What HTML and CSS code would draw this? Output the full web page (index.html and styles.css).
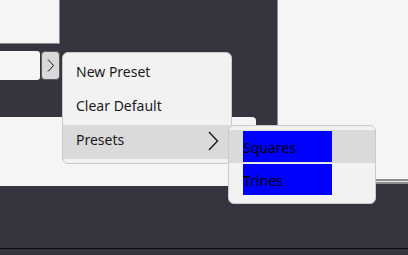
FILE: index.html
```html
<!DOCTYPE html>
<html>
<head>
<meta charset="utf-8">
<link rel="stylesheet" href="styles.css">
</head>
<body>
<div class="stage">
  <div class="top">
    <div class="left">
      <div class="panel-top"></div>
      <div class="input-row">
        <div class="field"></div>
        <div class="step-btn">
          <svg width="8" height="13" viewBox="0 0 8 13"><path d="M1 0.5 L6.5 6.5 L1 12.5" fill="none" stroke="#111" stroke-width="1"/></svg>
        </div>
      </div>
      <div class="panel-low"></div>
    </div>
    <div class="right">
      <div class="right-body"></div>
      <div class="right-rule"></div>
    </div>
  </div>
  <div class="bottom"></div>

  <div class="menu">
    <div class="item">New Preset</div>
    <div class="item">Clear Default</div>
    <div class="item active">Presets
      <svg class="chev" width="11" height="20" viewBox="0 0 11 20"><path d="M1 1 L9.5 10 L1 19" fill="none" stroke="#1a1a1a" stroke-width="1.4"/></svg>
    </div>
  </div>

  <div class="submenu">
    <div class="sub-item active"><span class="swatch">Squares</span></div>
    <div class="sub-item"><span class="swatch">Trines</span></div>
  </div>
</div>
</body>
</html>
```

FILE: styles.css
```css
html, body {
  margin: 0;
  padding: 0;
}
body {
  font-family: "Noto Sans", "Open Sans", sans-serif;
  background: #35353f;
}
.stage {
  position: relative;
  width: 408px;
  height: 255px;
  overflow: hidden;
  background: #35353f;
  display: flex;
  flex-direction: column;
}
.top {
  display: flex;
  height: 186px;
}
.left {
  width: 277px;
  display: flex;
  flex-direction: column;
}
.panel-top {
  width: 59px;
  height: 43px;
  background: #f5f5f5;
  border-right: 1px solid #8a8a90;
  border-bottom: 1px solid #8a8a90;
}
.input-row {
  display: flex;
  margin-top: 7px;
  height: 29px;
  gap: 1px;
}
.field {
  width: 40px;
  background: #f5f5f5;
  border-radius: 0 3px 3px 0;
}
.step-btn {
  width: 17px;
  background: #d9d9d9;
  border: 1px solid #5a5a60;
  border-radius: 4px;
  display: flex;
  align-items: center;
  justify-content: center;
}
.panel-low {
  margin-top: 37px;
  width: 256px;
  height: 69px;
  background: #f5f5f5;
  border-top-right-radius: 4px;
}
.right {
  flex: 1;
  display: flex;
  flex-direction: column;
}
.right-body {
  height: 179px;
  background: #f5f5f5;
  border-left: 1px solid #8a8a90;
}
.right-rule {
  height: 1px;
  border-top: 2px solid #8e8e92;
  border-bottom: 2px solid #8e8e92;
  background: #e6e6e6;
}
.bottom {
  height: 62px;
  border-bottom: 1px solid #0c0c0e;
}
.menu {
  position: absolute;
  left: 62px;
  top: 52px;
  width: 168px;
  height: 110px;
  padding-top: 4px;
  box-sizing: content-box;
  background: #f2f2f2;
  border: 1px solid #c9c9c9;
  border-radius: 6px;
}
.menu {
  height: 106px;
}
.item {
  position: relative;
  height: 30px;
  line-height: 30px;
  padding: 0 0 4px 13px;
  font-size: 14px;
  color: #1a1a1a;
}
.item.active {
  background: #dadada;
}
.chev {
  position: absolute;
  left: 145px;
  top: 6px;
}
.submenu {
  position: absolute;
  left: 228px;
  top: 125px;
  width: 146px;
  height: 73px;
  padding-top: 4px;
  background: #f2f2f2;
  border: 1px solid #c9c9c9;
  border-radius: 6px;
}
.sub-item {
  height: 31px;
  padding: 1px 0 1px 14px;
}
.sub-item.active {
  background: #dadada;
}
.swatch {
  display: block;
  width: 89px;
  height: 31px;
  line-height: 33px;
  background: #0000ff;
  color: #000;
  font-size: 14px;
}
```
